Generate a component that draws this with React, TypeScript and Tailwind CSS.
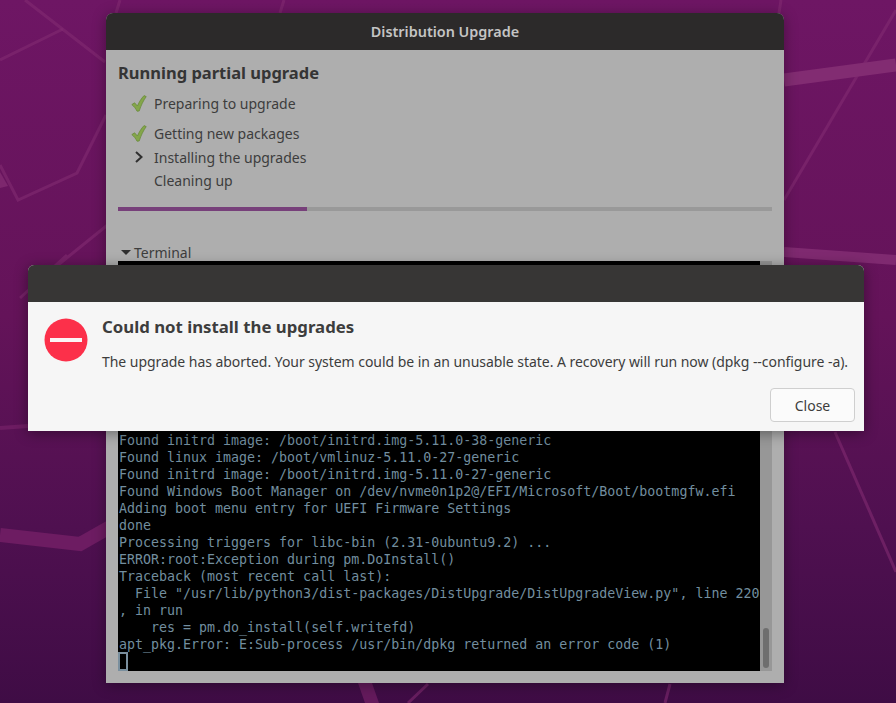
const terminalLines = [
  "Found initrd image: /boot/initrd.img-5.11.0-38-generic",
  "Found linux image: /boot/vmlinuz-5.11.0-27-generic",
  "Found initrd image: /boot/initrd.img-5.11.0-27-generic",
  "Found Windows Boot Manager on /dev/nvme0n1p2@/EFI/Microsoft/Boot/bootmgfw.efi",
  "Adding boot menu entry for UEFI Firmware Settings",
  "done",
  "Processing triggers for libc-bin (2.31-0ubuntu9.2) ...",
  "ERROR:root:Exception during pm.DoInstall()",
  "Traceback (most recent call last):",
  '  File "/usr/lib/python3/dist-packages/DistUpgrade/DistUpgradeView.py", line 220',
  ", in run",
  "    res = pm.do_install(self.writefd)",
  "apt_pkg.Error: E:Sub-process /usr/bin/dpkg returned an error code (1)",
];

function Wallpaper() {
  return (
    <svg className="absolute inset-0" width="896" height="703" viewBox="0 0 896 703" fill="none">
      <g stroke="#822c72" strokeOpacity="0.6" strokeWidth="3">
        <path d="M25 0 L105 62" />
        <path d="M0 60 L63 29" />
        <path d="M106 115 L77 173 L18 200 L0 165" />
        <path d="M110 223 L58 265 M67 255 L20 298" />
        <path d="M120 0 L116 13 M284 0 L280 13 M781 0 L779 13" />
        <path d="M896 10 L784 200" />
        <path d="M835 432 L896 572" />
        <path d="M428 684 L408 703 M670 684 L665 703" />
      </g>
      <path d="M0 172 L8 186 L0 188 Z" fill="#822c72" fillOpacity="0.8" />
      <path d="M784 80 L896 65" stroke="#822c72" strokeWidth="13" />
      <path d="M784 252 L896 260" stroke="#822c72" strokeOpacity="0.9" strokeWidth="10" />
      <path d="M0 535 L80 544 L110 527" stroke="#6d1c62" strokeWidth="14" />
      <path d="M0 428 L28 426" stroke="#6d1c62" strokeWidth="4" />
      <path d="M358 683 L372 683 L379 703 L365 703 Z" fill="#641a5c" />
    </svg>
  );
}

function CheckIcon() {
  return (
    <svg width="16" height="17" viewBox="0 0 16 17" className="block">
      <path
        d="M0.8 9.6 L3.6 7.8 L6.4 11 C8 7.2 10.4 3.4 13 0.6 L15.2 1.6 C12.4 5.6 10 10.4 8.2 16 L6 16.2 C4.8 13.6 3 11.4 0.8 9.6 Z"
        fill="#84a64a"
        stroke="#6a8c3c"
        strokeWidth="0.8"
      />
    </svg>
  );
}

function Step({ icon, label, className }: { icon?: React.ReactNode; label: string; className: string }) {
  return (
    <div className={`flex items-center ${className}`}>
      <div className="w-[36px] pl-[13px] flex-none">{icon}</div>
      <span className="text-[14px] text-[#3d3d3d]">{label}</span>
    </div>
  );
}

export default function App() {
  return (
    <div
      className="relative w-[896px] h-[703px] overflow-hidden bg-[linear-gradient(180deg,#6e1664_0%,#641359_45%,#4f1050_75%,#3f0c45_100%)]"
      style={{ fontFamily: '"Noto Sans", sans-serif' }}
    >
      <Wallpaper />

      {/* updater window, dimmed because the dialog is modal */}
      <div className="absolute left-[106px] top-[13px] w-[678px] h-[670px] flex flex-col rounded-t-[7px] overflow-hidden bg-[#aeaeae] shadow-[0_2px_14px_rgba(0,0,0,0.35)]">
        <div className="h-[37px] flex-none flex items-center justify-center bg-[#2c2a2a] text-[14.4px] font-semibold text-[#c4c4c4]">
          Distribution Upgrade
        </div>
        <div className="flex-1 flex flex-col pl-[12px] pr-[12px] min-h-0">
          <h1 className="mt-[10px] h-[25px] leading-[25px] text-[16.5px] font-bold text-[#353535]">
            Running partial upgrade
          </h1>
          <Step className="mt-[6px] h-[24px]" icon={<CheckIcon />} label="Preparing to upgrade" />
          <Step className="mt-[6px] h-[24px]" icon={<CheckIcon />} label="Getting new packages" />
          <Step
            className="h-[24px]"
            icon={
              <svg width="10" height="12" viewBox="0 0 10 12" className="block ml-[3px]">
                <path d="M2 1 L7.5 6 L2 11" fill="none" stroke="#303030" strokeWidth="2" />
              </svg>
            }
            label="Installing the upgrades"
          />
          <Step className="h-[22px]" label="Cleaning up" />
          <div className="mt-[16px] h-[4px] flex-none bg-[#999999]">
            <div className="h-full w-[189px] bg-[#77407a]" />
          </div>
          <div className="mt-[33px] h-[17px] flex items-center text-[14px] text-[#3d3d3d]">
            <svg width="10" height="5" viewBox="0 0 10 5" className="ml-[3px] mr-[3px]">
              <path d="M0 0 H10 L5 5 Z" fill="#303030" />
            </svg>
            Terminal
          </div>
          <div className="flex-1 min-h-0 flex mb-[12px]">
            <div className="flex-1 min-w-0 bg-black flex flex-col justify-end overflow-hidden pl-[1px]">
              {terminalLines.map((line) => (
                <div
                  key={line}
                  className="h-[17px] leading-[17px] text-[13.3px] whitespace-pre text-[#728e9f]"
                  style={{ fontFamily: '"DejaVu Sans Mono", monospace' }}
                >
                  {line}
                </div>
              ))}
              <div className="h-[19px] w-[10px] -mt-[1px] -ml-[1px] border-[2px] border-[#7a8f9e]" />
            </div>
            <div className="w-[12px] flex-none bg-[#979797] flex flex-col justify-end pb-[3px] pl-[3px]">
              <div className="w-[6px] h-[40px] rounded-full bg-[#6e6e6e]" />
            </div>
          </div>
        </div>
      </div>

      {/* error dialog */}
      <div className="absolute left-[28px] top-[265px] w-[836px] h-[166px] flex flex-col rounded-t-[6px] overflow-hidden bg-[#f6f6f6] shadow-[0_2px_14px_rgba(0,0,0,0.4)]">
        <div className="h-[37px] flex-none bg-[#373635]" />
        <div className="flex-1 flex flex-col">
          <div className="flex">
            <svg width="44" height="44" viewBox="0 0 44 44" className="flex-none mt-[16px] ml-[16px]">
              <circle cx="22" cy="22" r="21.5" fill="#fc304a" />
              <rect x="6" y="20" width="32" height="4" fill="#fbf5f5" />
            </svg>
            <div className="ml-[14px]">
              <div className="mt-[13px] h-[24px] leading-[24px] text-[16.8px] font-bold text-[#3d3d3d]">
                Could not install the upgrades
              </div>
              <div className="mt-[12px] h-[22px] leading-[22px] text-[14px] tracking-[-0.045px] whitespace-nowrap text-[#3d3d3d]">
                The upgrade has aborted. Your system could be in an unusable state. A recovery will run now (dpkg --configure -a).
              </div>
            </div>
          </div>
          <div className="flex justify-end mt-[15px] pr-[9px]">
            <button className="w-[85px] h-[34px] rounded-[4px] border border-[#cfcfcf] bg-[#fbfbfb] text-[14px] text-[#3d3d3d]">
              Close
            </button>
          </div>
        </div>
      </div>
    </div>
  );
}
